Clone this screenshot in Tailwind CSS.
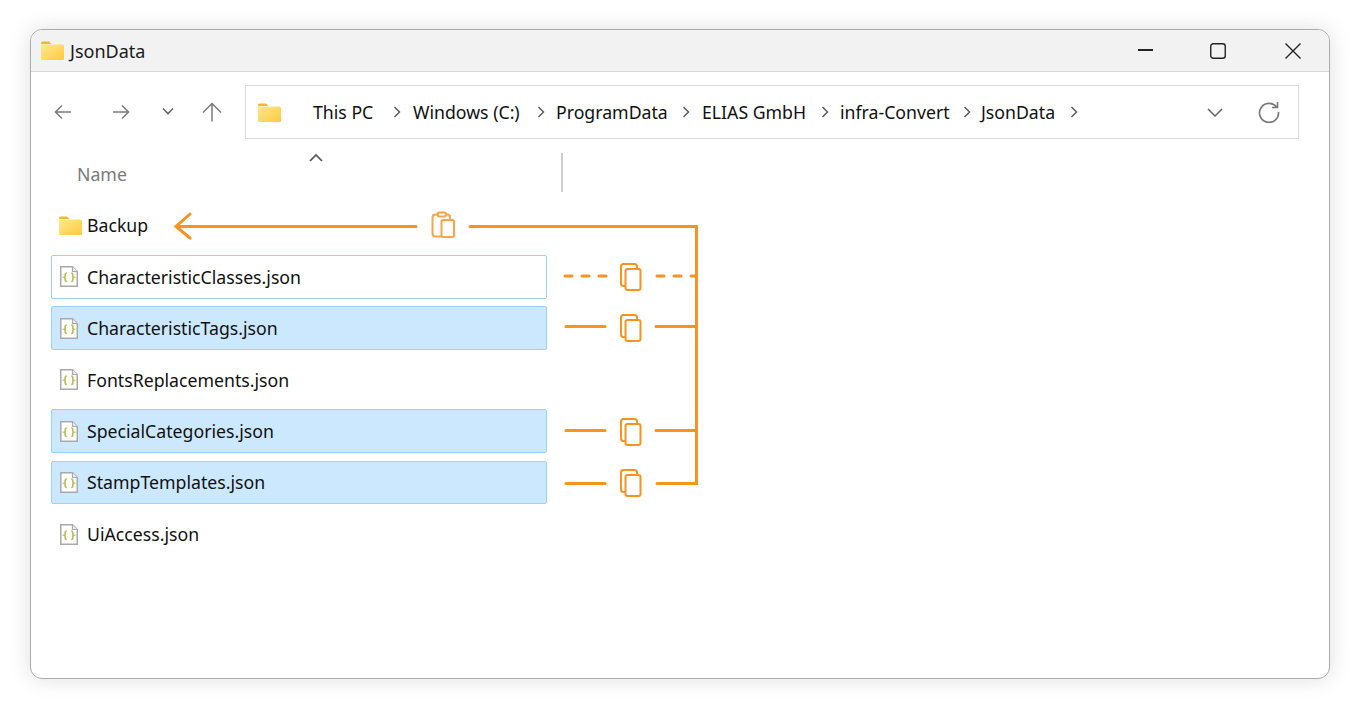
<!DOCTYPE html>
<html lang="en">
<head>
  <meta charset="UTF-8">
  <title>JsonData</title>
  <script src="https://cdn.jsdelivr.net/npm/@tailwindcss/browser@4"></script>
</head>
<body class="bg-white h-[708px] font-['Noto_Sans',sans-serif] text-[17.7px] text-[#111]">
  <!-- shared icons -->
  <svg width="0" height="0" class="absolute">
    <defs>
      <linearGradient id="folderFill" x1="0" y1="0" x2="1" y2="1">
        <stop offset="0" stop-color="#ffe98f"/>
        <stop offset="1" stop-color="#fcc93e"/>
      </linearGradient>
      <symbol id="folder" viewBox="0 0 23 19">
        <path d="M0 2.5Q0 .5 2 .5H8L10.5 3H0Z" fill="#f5b82a"/>
        <path d="M0 3.5H21.5Q23 3.5 23 5V17.5Q23 19 21.5 19H1.5Q0 19 0 17.5Z" fill="url(#folderFill)"/>
      </symbol>
      <symbol id="jsonfile" viewBox="0 0 18 21">
        <path d="M.75.75H12.5L17.25 5.5V20.25H.75Z" fill="#fff" stroke="#a9a9a9" stroke-width="1.5"/>
        <path d="M12.5.75V5.5H17.25" fill="#eee" stroke="#a9a9a9" stroke-width="1.2"/>
        <path d="M6.8 7Q5.2 7 5.2 8.5V10Q5.2 11 4.4 11.2Q5.2 11.5 5.2 12.5V14Q5.2 15.5 6.8 15.5" fill="none" stroke="#b5c055" stroke-width="1.7"/>
        <path d="M11.2 7Q12.8 7 12.8 8.5V10Q12.8 11 13.6 11.2Q12.8 11.5 12.8 12.5V14Q12.8 15.5 11.2 15.5" fill="none" stroke="#b5c055" stroke-width="1.7"/>
      </symbol>
      <symbol id="crumb" viewBox="0 0 8 12">
        <path d="M1.5 1L6.5 6L1.5 11" fill="none" stroke="#555" stroke-width="1.4"/>
      </symbol>
      <g id="copy">
        <rect x="1" y="1" width="16" height="22" rx="2.5" fill="#fff" stroke="#f7931e" stroke-width="2"/>
        <rect x="5.5" y="6" width="15" height="21" rx="2" fill="#fff" stroke="#f7931e" stroke-width="2"/>
      </g>
    </defs>
  </svg>

  <div class="relative ml-[30px] mt-[29px] w-[1300px] h-[650px] rounded-[12px] border border-[#ababab] bg-white shadow-[0_0_22px_rgba(0,0,0,0.13)]">
    <!-- title bar -->
    <div class="flex items-center h-[42px] bg-[#f2f2f2] border-b border-[#d8d8d8] rounded-t-[12px] pl-[10px]">
      <svg class="w-[23px] h-[19px]"><use href="#folder"/></svg>
      <span class="ml-[6px] mt-[1px] text-[18px] text-[#1a1a1a]">JsonData</span>
      <div class="ml-auto flex items-center mt-[1px]">
        <svg class="w-[16px] h-[16px] mr-[56px]" viewBox="0 0 16 16"><path d="M0 7H15" stroke="#222" stroke-width="2"/></svg>
        <svg class="w-[16px] h-[16px] mr-[59px]" viewBox="0 0 16 16"><rect x=".75" y=".75" width="14.5" height="14.5" rx="2.5" fill="none" stroke="#222" stroke-width="1.4"/></svg>
        <svg class="w-[16px] h-[16px] mr-[28px]" viewBox="0 0 16 16"><path d="M.5.5L15.5 15.5M15.5.5L.5 15.5" stroke="#222" stroke-width="1.4"/></svg>
      </div>
    </div>

    <!-- nav + address bar -->
    <div class="flex items-center h-[54px] mt-[13px] pl-[23px] pr-[30px]">
      <svg class="w-[18px] h-[16px]" viewBox="0 0 18 16"><path d="M17 8H1.5M8 1.5L1.5 8L8 14.5" fill="none" stroke="#7b7b7b" stroke-width="1.5"/></svg>
      <svg class="w-[18px] h-[16px] ml-[40px]" viewBox="0 0 18 16"><path d="M1 8H16.5M10 1.5L16.5 8L10 14.5" fill="none" stroke="#7b7b7b" stroke-width="1.5"/></svg>
      <svg class="w-[12px] h-[8px] ml-[32px] mb-[3px]" viewBox="0 0 12 8"><path d="M1 1.5L6 6.5L11 1.5" fill="none" stroke="#666" stroke-width="1.6"/></svg>
      <svg class="w-[20px] h-[20px] ml-[28px]" viewBox="0 0 20 20"><path d="M10 19.5V1.5M1 10.5L10 1.5L19 10.5" fill="none" stroke="#7b7b7b" stroke-width="1.5"/></svg>
      <div class="flex items-center ml-[23px] w-[1054px] h-[54px] border border-[#d9d9d9] pl-[12px]">
        <svg class="w-[23px] h-[19px]"><use href="#folder"/></svg>
        <span class="w-[80px] ml-[32px]">This PC</span>
        <span class="w-[20px]"><svg class="w-[8px] h-[12px]"><use href="#crumb"/></svg></span>
        <span class="w-[124px]">Windows (C:)</span>
        <span class="w-[19px]"><svg class="w-[8px] h-[12px]"><use href="#crumb"/></svg></span>
        <span class="w-[126px]">ProgramData</span>
        <span class="w-[20px]"><svg class="w-[8px] h-[12px]"><use href="#crumb"/></svg></span>
        <span class="w-[119px]">ELIAS GmbH</span>
        <span class="w-[19px]"><svg class="w-[8px] h-[12px]"><use href="#crumb"/></svg></span>
        <span class="w-[123px]">infra-Convert</span>
        <span class="w-[18px]"><svg class="w-[8px] h-[12px]"><use href="#crumb"/></svg></span>
        <span class="w-[89px]">JsonData</span>
        <svg class="w-[8px] h-[12px]"><use href="#crumb"/></svg>
        <svg class="w-[16px] h-[9px] ml-auto" viewBox="0 0 16 9"><path d="M1 1L8 8L15 1" fill="none" stroke="#666" stroke-width="1.5"/></svg>
        <svg class="w-[22px] h-[22px] ml-[35px] mr-[18px]" viewBox="0 0 22 22"><path d="M18.5 6A9.5 9.5 0 1 0 20.5 11" fill="none" stroke="#777" stroke-width="1.6"/><path d="M19.5 1V6.5H14" fill="none" stroke="#777" stroke-width="1.6"/></svg>
      </div>
    </div>

    <!-- column header -->
    <div class="relative flex items-center h-[39px] mt-[14px] pl-[46px] text-[#7a7a7a]">
      <span class="mt-[4px]">Name</span>
      <svg class="absolute left-[278px] top-0 w-[14px] h-[9px]" viewBox="0 0 14 9"><path d="M1 8L7 2L13 8" fill="none" stroke="#555" stroke-width="1.7"/></svg>
      <div class="absolute left-[530px] top-0 w-[2px] h-[39px] bg-[#cfcfcf]"></div>
    </div>

    <!-- file list -->
    <div class="flex flex-col gap-[7.5px] mt-[11px] ml-[20px] w-[496px]">
      <div class="flex items-center h-[44px] pl-[8px]"><svg class="w-[23px] h-[19px]"><use href="#folder"/></svg><span class="ml-[5px]">Backup</span></div>
      <div class="flex items-center h-[44px] pl-[8px] rounded-[2px] border border-[#99d1fb]"><svg class="w-[18px] h-[21px]"><use href="#jsonfile"/></svg><span class="ml-[9px] mt-[1px]">CharacteristicClasses.json</span></div>
      <div class="flex items-center h-[44px] pl-[8px] rounded-[2px] border border-[#99d1fb] bg-[#cce8ff]"><svg class="w-[18px] h-[21px]"><use href="#jsonfile"/></svg><span class="ml-[9px] mt-[1px]">CharacteristicTags.json</span></div>
      <div class="flex items-center h-[44px] pl-[8px] border border-transparent"><svg class="w-[18px] h-[21px]"><use href="#jsonfile"/></svg><span class="ml-[9px] mt-[1px]">FontsReplacements.json</span></div>
      <div class="flex items-center h-[44px] pl-[8px] rounded-[2px] border border-[#99d1fb] bg-[#cce8ff]"><svg class="w-[18px] h-[21px]"><use href="#jsonfile"/></svg><span class="ml-[9px] mt-[1px]">SpecialCategories.json</span></div>
      <div class="flex items-center h-[43px] pl-[8px] rounded-[2px] border border-[#99d1fb] bg-[#cce8ff]"><svg class="w-[18px] h-[21px]"><use href="#jsonfile"/></svg><span class="ml-[9px] mt-[1px]">StampTemplates.json</span></div>
      <div class="flex items-center h-[44px] pl-[8px] mt-[1px] border border-transparent"><svg class="w-[18px] h-[21px]"><use href="#jsonfile"/></svg><span class="ml-[9px]">UiAccess.json</span></div>
    </div>
  </div>

  <!-- orange annotation drawn over the window -->
  <svg class="absolute left-0 top-0 w-[1359px] h-[708px] pointer-events-none" viewBox="0 0 1359 708" fill="none" stroke="#f7931e" stroke-width="3" stroke-linecap="round">
    <path d="M470 226.5H696.5V483.5H657"/>
    <path d="M656 326.5H696M656 430.5H696"/>
    <path d="M416 226.5H177M190 214L176 226.5L190 238"/>
    <path d="M565 276H607" stroke-dasharray="7 10"/>
    <path d="M657 276H696" stroke-dasharray="7 10"/>
    <path d="M566 326.5H605M566 430.5H605M566 483.5H605"/>
    <!-- paste icon -->
    <g stroke-width="2" stroke="#f8a54a">
      <path d="M438 214.5H435.5Q432.5 214.5 432.5 217.5V233.5Q432.5 236.5 435.5 236.5H441M446 214.5H447Q450 214.5 450 217.5V219"/>
      <rect x="437.5" y="212.5" width="8.5" height="4" rx="2"/>
      <rect x="441.5" y="220" width="12.5" height="17" rx="1.5" fill="#fff"/>
    </g>
    <use href="#copy" transform="translate(620 263)"/>
    <use href="#copy" transform="translate(620 314)"/>
    <use href="#copy" transform="translate(620 418)"/>
    <use href="#copy" transform="translate(620 469)"/>
  </svg>
</body>
</html>
